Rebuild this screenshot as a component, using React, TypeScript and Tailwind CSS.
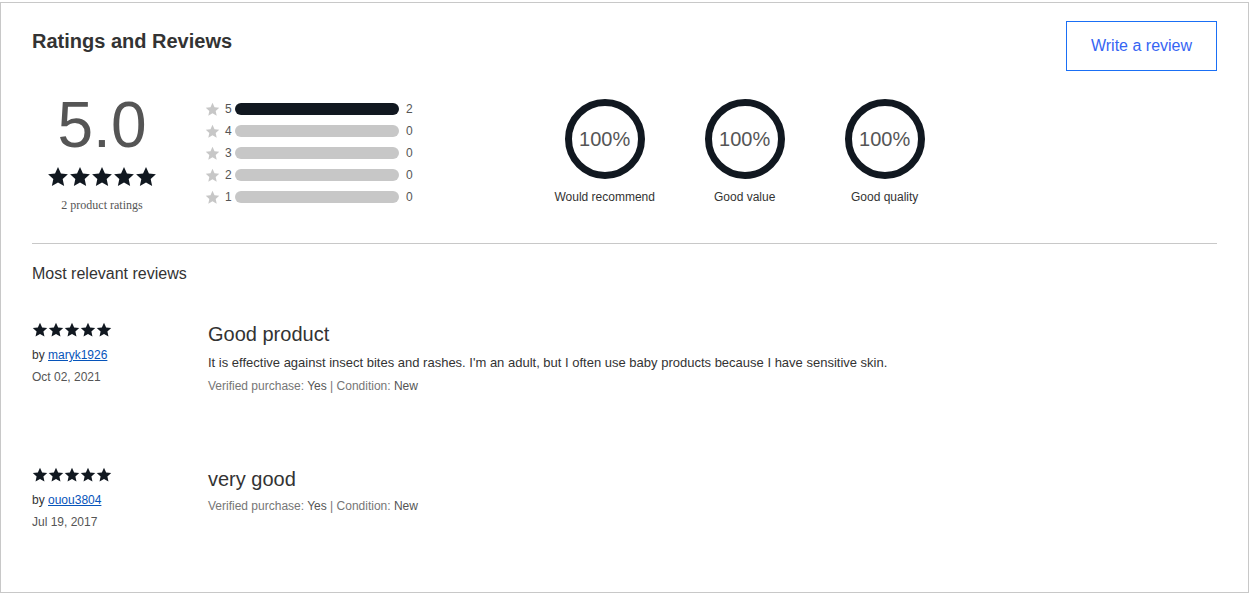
import React from 'react';

const STAR = 'M12 1.2l3.2 7.1 7.6.8-5.7 5.1 1.6 7.6L12 17.9l-6.7 3.9 1.6-7.6-5.7-5.1 7.6-.8z';

function Star({ size, color }: { size: number; color: string }) {
  return (
    <svg width={size} height={size} viewBox="0 0 24 24" className="block shrink-0">
      <path d={STAR} fill={color} />
    </svg>
  );
}

function Stars({ size }: { size: number }) {
  return (
    <div className="flex">
      {[0, 1, 2, 3, 4].map((i) => (
        <Star key={i} size={size} color="#111820" />
      ))}
    </div>
  );
}

const bars = [
  { n: 5, count: 2, full: true },
  { n: 4, count: 0, full: false },
  { n: 3, count: 0, full: false },
  { n: 2, count: 0, full: false },
  { n: 1, count: 0, full: false },
];

const aspects = ['Would recommend', 'Good value', 'Good quality'];

const reviews = [
  {
    user: 'maryk1926',
    date: 'Oct 02, 2021',
    title: 'Good product',
    body: "It is effective against insect bites and rashes. I'm an adult, but I often use baby products because I have sensitive skin.",
  },
  { user: 'ouou3804', date: 'Jul 19, 2017', title: 'very good', body: '' },
];

export default function App() {
  return (
    <div className="min-h-screen bg-white font-['Liberation_Sans',Arial,sans-serif] text-[#333]">
      <div className="mt-[2px] h-[591px] w-[1249px] border border-[#c8c8c8] bg-white px-[31px] pt-[18px]">
        {/* Header */}
        <div className="flex items-start justify-between">
          <h2 className="mt-[8px] text-[20px] font-bold leading-[24px] text-[#333]">Ratings and Reviews</h2>
          <button className="h-[50px] w-[151px] border border-[#1a6ff5] text-[16px] text-[#3665f3]">
            Write a review
          </button>
        </div>

        {/* Summary */}
        <div className="mt-[27px] flex items-start">
          <div className="flex w-[140px] flex-col items-center">
            <div className="-mt-[5px] text-[64px] leading-[64px] text-[#555]">5.0</div>
            <div className="mt-[9px]">
              <Stars size={22} />
            </div>
            <div className="mt-[10px] font-['Liberation_Serif',serif] text-[12px] leading-[14px] text-[#555]">
              2 product ratings
            </div>
          </div>

          <div className="ml-[33px] flex flex-col">
            {bars.map((b) => (
              <div key={b.n} className="flex h-[22px] items-center text-[12px] text-[#555]">
                <Star size={15} color="#c7c7c7" />
                <span className="ml-[5px] w-[10px]">{b.n}</span>
                <div className={`h-[12px] w-[164px] rounded-full ${b.full ? 'bg-[#111820]' : 'bg-[#c7c7c7]'}`} />
                <span className="ml-[7px]">{b.count}</span>
              </div>
            ))}
          </div>

          <div className="ml-[122px] flex">
            {aspects.map((a) => (
              <div key={a} className="flex w-[140px] flex-col items-center">
                <div className="mt-px flex h-[80px] w-[80px] items-center justify-center rounded-full border-[7px] border-[#111820] text-[20px] text-[#555]">
                  100%
                </div>
                <div className="mt-[11px] text-[12px] leading-[14px] text-[#333]">{a}</div>
              </div>
            ))}
          </div>
        </div>

        <div className="mt-[31px] border-t border-[#c8c8c8]" />

        <div className="mt-[21px] text-[16px] leading-[18px] text-[#333]">Most relevant reviews</div>

        {/* Reviews */}
        <div className="mt-[39px] flex flex-col">
          {reviews.map((r) => (
            <div key={r.user} className="flex h-[145px] items-start">
              <div className="w-[176px]">
                <Stars size={16} />
                <div className="mt-[6px] text-[12px] leading-[22px] text-[#333]">
                  by <a href="#" className="text-[#0654ba] underline">{r.user}</a>
                </div>
                <div className="text-[12px] leading-[22px] text-[#555]">{r.date}</div>
              </div>
              <div className="flex flex-col">
                <div className="text-[20px] leading-[24px] text-[#333]">{r.title}</div>
                {r.body && <div className="mt-[9px] text-[13px] leading-[16px] text-[#333]">{r.body}</div>}
                <div className="mt-[7px] text-[12px] leading-[16px] text-[#767676]">
                  Verified purchase: <span className="text-[#555]">Yes</span> | Condition:{' '}
                  <span className="text-[#555]">New</span>
                </div>
              </div>
            </div>
          ))}
        </div>
      </div>
    </div>
  );
}
